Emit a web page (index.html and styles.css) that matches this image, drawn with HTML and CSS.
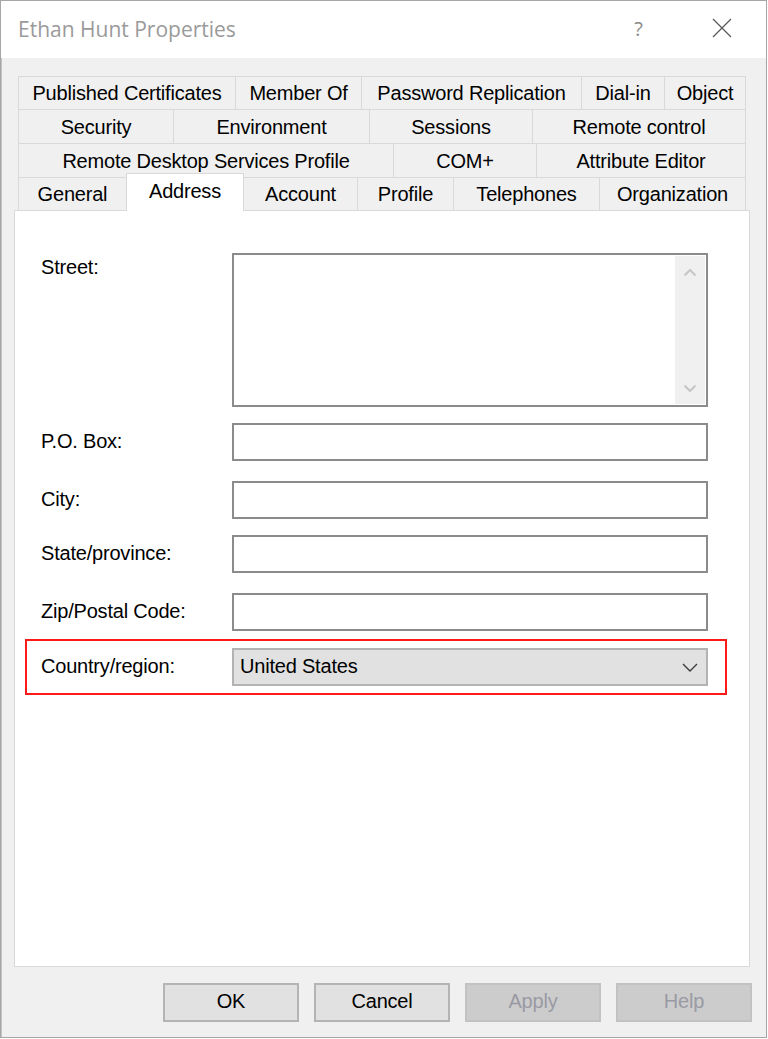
FILE: index.html
```html
<!DOCTYPE html>
<html lang="en">
<head>
<meta charset="utf-8">
<title>Ethan Hunt Properties</title>
<link rel="stylesheet" href="styles.css">
</head>
<body>
<div class="window">
  <div class="titlebar">
    <span class="title">Ethan Hunt Properties</span>
    <span class="help-glyph">?</span>
    <span class="close-glyph">
      <svg width="20" height="20" viewBox="0 0 20 20"><path d="M1 1 L19 19 M19 1 L1 19" stroke="#5a5a5a" stroke-width="1.3" fill="none"/></svg>
    </span>
  </div>
  <div class="dialog-body">
    <div class="tabs">
      <div class="tabrow row-a">
        <div class="tab t-pubcert">Published Certificates</div>
        <div class="tab t-member">Member Of</div>
        <div class="tab t-pwrep">Password Replication</div>
        <div class="tab t-dialin">Dial-in</div>
        <div class="tab t-object last">Object</div>
      </div>
      <div class="tabrow row-b">
        <div class="tab t-security">Security</div>
        <div class="tab t-env">Environment</div>
        <div class="tab t-sessions">Sessions</div>
        <div class="tab t-remote last">Remote control</div>
      </div>
      <div class="tabrow row-b">
        <div class="tab t-rdsp">Remote Desktop Services Profile</div>
        <div class="tab t-com">COM+</div>
        <div class="tab t-attr last">Attribute Editor</div>
      </div>
      <div class="tabrow row-a front">
        <div class="tab t-general">General</div>
        <div class="tab t-address selected">Address</div>
        <div class="tab t-account">Account</div>
        <div class="tab t-profile">Profile</div>
        <div class="tab t-phones">Telephones</div>
        <div class="tab t-org last">Organization</div>
      </div>
    </div>

    <div class="panel">
      <div class="form-row street-row">
        <label class="label">Street:</label>
        <div class="field textarea">
          <div class="scrollbar">
            <svg width="14" height="9" viewBox="0 0 14 9"><path d="M1.5 7.5 L7 2 L12.5 7.5" stroke="#c6c6c6" stroke-width="2" fill="none"/></svg>
            <svg width="14" height="9" viewBox="0 0 14 9"><path d="M1.5 1.5 L7 7 L12.5 1.5" stroke="#c6c6c6" stroke-width="2" fill="none"/></svg>
          </div>
        </div>
      </div>
      <div class="form-row gap-s">
        <label class="label">P.O. Box:</label>
        <div class="field"></div>
      </div>
      <div class="form-row gap-l">
        <label class="label">City:</label>
        <div class="field"></div>
      </div>
      <div class="form-row gap-s">
        <label class="label">State/province:</label>
        <div class="field"></div>
      </div>
      <div class="form-row gap-l">
        <label class="label">Zip/Postal Code:</label>
        <div class="field"></div>
      </div>
      <div class="highlight">
        <label class="label">Country/region:</label>
        <div class="field combo">
          <span class="combo-value">United States</span>
          <svg class="combo-arrow" width="16" height="9" viewBox="0 0 16 9"><path d="M1 1 L8 8 L15 1" stroke="#3c3c3c" stroke-width="1.4" fill="none"/></svg>
        </div>
      </div>
    </div>

    <div class="buttons">
      <button class="btn">OK</button>
      <button class="btn">Cancel</button>
      <button class="btn disabled">Apply</button>
      <button class="btn disabled">Help</button>
    </div>
  </div>
</div>
</body>
</html>
```

FILE: styles.css
```css
html, body {
  margin: 0;
  padding: 0;
  background: #ffffff;
}

body {
  font-family: "Liberation Sans", Arial, sans-serif;
  font-size: 20px;
  letter-spacing: -0.2px;
  color: #000;
}

.window {
  width: 767px;
  height: 1038px;
  box-sizing: border-box;
  border: 1px solid #a6a6a6;
  display: flex;
  flex-direction: column;
  background: #f0f0f0;
}

/* Title bar */
.titlebar {
  height: 57px;
  flex: none;
  background: #ffffff;
  display: flex;
  align-items: center;
  padding-left: 17px;
  box-sizing: border-box;
}

.title {
  font-family: "Open Sans", "Noto Sans", sans-serif;
  font-size: 21px;
  letter-spacing: 0;
  color: #9a9a9a;
  flex: 1;
  padding-bottom: 2px;
}

.help-glyph {
  font-family: "Open Sans", "Noto Sans", sans-serif;
  font-size: 20px;
  letter-spacing: 0;
  color: #8a8a8a;
  margin-right: 69px;
  padding-bottom: 2px;
}

.close-glyph {
  display: flex;
  margin-right: 34px;
  padding-bottom: 3px;
}

/* Body */
.dialog-body {
  flex: 1;
  display: flex;
  flex-direction: column;
  padding: 18px 14px 0 12px;
  border-left: 1px solid #c4c4c4;
}

.tabs {
  margin-left: 4px;
  width: 728px;
  display: flex;
  flex-direction: column;
}

.tabrow {
  display: flex;
  height: 34px;
}

.tabrow.row-a {
  height: 33px;
}

.tabrow.front {
  position: relative;
  z-index: 2;
}

.tab {
  flex: none;
  box-sizing: border-box;
  border-top: 1px solid #d9d9d9;
  border-left: 1px solid #d9d9d9;
  display: flex;
  align-items: center;
  justify-content: center;
  white-space: nowrap;
  padding-top: 1px;
}

.tab.last {
  border-right: 1px solid #d9d9d9;
}

.tab.selected {
  background: #ffffff;
  margin-top: -4px;
  height: 38px;
  border-right: 1px solid #d9d9d9;
  padding-bottom: 4px;
}

.t-pubcert { width: 217px; }
.t-member { width: 126px; }
.t-pwrep { width: 220px; }
.t-dialin { width: 83px; }
.t-object { width: 82px; }

.t-security { width: 155px; }
.t-env { width: 196px; }
.t-sessions { width: 163px; }
.t-remote { width: 214px; }

.t-rdsp { width: 375px; }
.t-com { width: 143px; }
.t-attr { width: 210px; }

.t-general { width: 108px; }
.t-address { width: 118px; }
.t-account { width: 113px; border-left: none; }
.t-profile { width: 96px; }
.t-phones { width: 146px; }
.t-org { width: 147px; }

/* Panel */
.panel {
  width: 736px;
  height: 757px;
  box-sizing: border-box;
  border: 1px solid #d9d9d9;
  background: #ffffff;
  padding-top: 42px;
  display: flex;
  flex-direction: column;
}

.form-row {
  display: flex;
  align-items: center;
  padding-left: 26px;
}

.form-row.street-row {
  align-items: flex-start;
}

.form-row.street-row .label {
  margin-top: 3px;
}

.form-row.gap-s {
  margin-top: 16px;
}

.form-row.gap-l {
  margin-top: 20px;
}

.label {
  width: 191px;
  flex: none;
  line-height: 23px;
  padding-bottom: 2px;
}

.field {
  width: 476px;
  height: 38px;
  flex: none;
  box-sizing: border-box;
  border: 2px solid #8b8b8b;
  background: #ffffff;
}

.field.textarea {
  height: 154px;
  display: flex;
  justify-content: flex-end;
  padding: 1px 1px 1px 0;
}

.scrollbar {
  width: 30px;
  background: #f0f0f0;
  display: flex;
  flex-direction: column;
  align-items: center;
  justify-content: space-between;
  padding: 12px 0 11px;
  box-sizing: border-box;
}

.highlight {
  margin-top: 8px;
  margin-left: 10px;
  width: 702px;
  height: 56px;
  box-sizing: border-box;
  border: 2px solid #ff1a1a;
  padding-left: 14px;
  display: flex;
  align-items: center;
}

.field.combo {
  background: #e1e1e1;
  border-color: #b3b3b3;
  display: flex;
  align-items: center;
  padding-left: 6px;
  padding-right: 8px;
}

.combo-value {
  flex: 1;
  padding-bottom: 2px;
}

/* Buttons */
.buttons {
  display: flex;
  justify-content: flex-end;
  gap: 15px;
  margin-top: 16px;
}

.btn {
  width: 136px;
  height: 39px;
  box-sizing: border-box;
  border: 2px solid #b4b4b4;
  background: #e1e1e1;
  font-family: "Liberation Sans", Arial, sans-serif;
  font-size: 20px;
  letter-spacing: -0.2px;
  color: #000;
  padding: 0 0 2px;
  margin: 0;
}

.btn.disabled {
  background: #cccccc;
  border-color: #c2c2c2;
  color: #9a9aa4;
}
```
